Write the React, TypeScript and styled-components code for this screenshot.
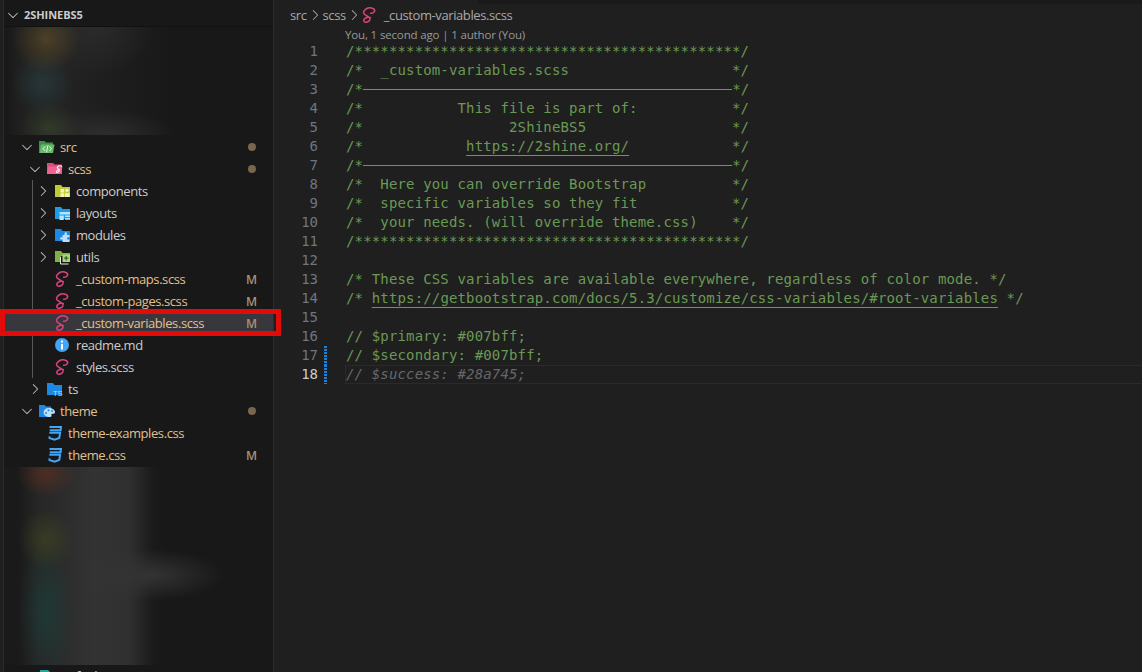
import React from "react";
import styled, { createGlobalStyle } from "styled-components";
import { VscChevronDown, VscChevronRight } from "react-icons/vsc";

const GlobalStyle = createGlobalStyle`
  html, body {
    margin: 0;
    height: 100%;
    background: #1f1f1f;
    overflow: hidden;
  }
  #root {
    height: 100%;
  }
`;

type IconKind =
  | "srcFolder"
  | "scssFolder"
  | "components"
  | "layouts"
  | "modules"
  | "utils"
  | "sass"
  | "info"
  | "ts"
  | "theme"
  | "css"
  | "settings";

const SassIcon = () => (
  <svg width="16" height="16" viewBox="3 1.500 13 13.500" fill="none">
    <path
      d="M13.5 4.5C13 2 9 1.5 6.5 3 4 4.5 3 6.8 5.5 8.2c2 1.1 4 1.6 4 3.4 0 1.8-2.2 3-4 2.7-1.7-.3-1.6-2.2-.2-3.2 1.3-1 3-1.2 4.4-.8M13.5 4.5c0 1.5-2 2.5-3.5 2.3"
      stroke="#d9407f"
      strokeWidth="1.3"
      strokeLinecap="round"
    />
  </svg>
);

const FileIcon = ({ kind }: { kind: IconKind }) => {
  switch (kind) {
    case "srcFolder":
      return (
        <svg width="16" height="16" viewBox="0 0 16 16">
          <path d="M0 2h5.5L7 3.5h7V14H0z" fill="#3f8f45" />
          <path d="M2 5.5h13.5L14 14H0.5z" fill="#66bb6a" />
          <path d="M6 7.5 4 9.7l2 2.2M10.5 7.5l2 2.2-2 2.2M8.9 6.5l-1.4 7" stroke="#e8f5e9" strokeWidth="1" fill="none" />
        </svg>
      );
    case "scssFolder":
      return (
        <svg width="16" height="16" viewBox="0 0 16 16">
          <path d="M0 2h6l1.5 1.5H15V13H0z" fill="#d84f86" />
          <path d="M1 5.5h14.5L14 13H0z" fill="#f06292" />
          <path d="M15 5.5c-1.500-1.400-5-.7-4.700 1.200.2 1.200 2.600 1.400 2.100 3-.4 1.400-2.500 2.400-3 1.300-.3-1.100 1.500-2.300 3.700-2.300" stroke="#fce4ec" strokeWidth="1.2" fill="none" />
        </svg>
      );
    case "components":
      return (
        <svg width="16" height="16" viewBox="0 0 16 16">
          <path d="M0 2h6l1.5 2H15v10H0z" fill="#c0ca33" />
          <path d="M5.5 6h3.700v3.400H5.500zM5.500 10.200h3.700V14H5.500zM10 10.200h4.500V14H10zM12 5.200l2.200 2.200L12 9.600 9.800 7.400z" fill="#f0f4c3" />
        </svg>
      );
    case "layouts":
      return (
        <svg width="16" height="16" viewBox="0 0 16 16">
          <path d="M0 2h6l1.5 2H15v10H0z" fill="#1e9be8" />
          <path d="M4.500 7H15v2.400H4.500zM4.500 10.400h4.300V15H4.500zM10 10.400h5V12h-5zM10 13h5v1.800h-5z" fill="#b3e5fc" />
        </svg>
      );
    case "modules":
      return (
        <svg width="16" height="16" viewBox="0 0 16 16">
          <path d="M0 2h6l1.5 2H15v10H0z" fill="#1e88e5" />
          <path d="M7.500 8h2V6.500a1.200 1.200 0 0 1 2.400 0V8h2.600v2.200h-1.300a1.200 1.200 0 0 0 0 2.400h1.300V15h-7v-2.400H6.300a1.200 1.200 0 0 1 0-2.400h1.200z" fill="#bbdefb" />
        </svg>
      );
    case "utils":
      return (
        <svg width="16" height="16" viewBox="0 0 16 16">
          <path d="M0 2h6l1.5 2H15v9H0z" fill="#7cb342" />
          <path d="M5 7h10v9H5z" fill="#181818" />
          <path d="M7.500 5.500H15V13H7.500z" fill="#aed581" />
          <path d="M11.200 7v4.500M9 9.200h4.400" stroke="#33691e" strokeWidth="1.2" />
          <path d="M5.500 7.500V15h8" stroke="#dcedc8" strokeWidth="1" fill="none" />
        </svg>
      );
    case "sass":
      return <SassIcon />;
    case "info":
      return (
        <svg width="16" height="16" viewBox="0 0 16 16">
          <circle cx="7" cy="8" r="7" fill="#42a5f5" />
          <path d="M6 3.500h2v2H6zM6 7h2v5.500H6z" fill="#ffffff" />
        </svg>
      );
    case "ts":
      return (
        <svg width="16" height="16" viewBox="0 0 16 16">
          <path d="M0 2h6l1.5 2H15v10H0z" fill="#1e88e5" />
          <text x="6" y="14.500" fontSize="7.500" fontFamily="Liberation Sans, sans-serif" fill="#bbdefb">TS</text>
        </svg>
      );
    case "theme":
      return (
        <svg width="16" height="16" viewBox="0 0 16 16">
          <path d="M0 2h5.500L7 3.500h5V14H0z" fill="#1e88e5" />
          <path d="M10 5c3.200 0 6 1.900 6 4.200 0 1.700-1.800 1.500-2.700 1.500-1.100 0-1.100 1.400-.7 1.900.4.700-.4 1.400-2 1.400-3.400 0-6-2-6-4.500S6.800 5 10 5z" fill="#bbdefb" />
          <circle cx="7" cy="10" r="1" fill="#1e88e5" />
          <circle cx="9.500" cy="7.300" r="1" fill="#1e88e5" />
          <circle cx="13" cy="8" r="1" fill="#1e88e5" />
        </svg>
      );
    case "css":
      return (
        <svg width="16" height="16" viewBox="0 0 16 16" fill="none">
          <path d="M2.500 2H14l-.4 3.200H2.800M2.400 7.800h10.700L12.300 13l-4.800 1.700L2.500 13l.1-1.600" stroke="#42a5f5" strokeWidth="2" />
        </svg>
      );
    case "settings":
      return (
        <svg width="16" height="16" viewBox="0 0 16 16">
          <path d="M1 2h8l4 4v10H1z" fill="#26a69a" />
        </svg>
      );
  }
};

const Page = styled.div`
  display: flex;
  height: 672px;
  width: 1142px;
  overflow: hidden;
  background: #1f1f1f;
`;

const Sidebar = styled.aside`
  flex: 0 0 271px;
  margin-left: 3px;
  box-sizing: border-box;
  height: 672px;
  background: #181818;
  border-left: 1px solid #2b2b2b;
  border-right: 1px solid #2b2b2b;
  font-family: "Open Sans", "Noto Sans", sans-serif;
  font-size: 13px;
`;

const SectionHeader = styled.div`
  display: flex;
  align-items: center;
  height: 27px;
  padding: 3px 0 0 1px;
  gap: 3px;
  color: #cccccc;
  font-size: 11px;
  font-weight: 700;
  letter-spacing: -0.05px;
  border-bottom: 1px solid #111111;
  box-sizing: border-box;

  svg {
    flex: none;
  }
`;

const BlurTop = styled.div`
  height: 108px;
  margin-bottom: 1px;
  background:
    radial-gradient(ellipse 34px 34px at 42px 12px, rgba(110, 88, 40, 0.55), transparent),
    radial-gradient(ellipse 30px 32px at 38px 56px, rgba(48, 80, 85, 0.45), transparent),
    radial-gradient(ellipse 30px 26px at 44px 100px, rgba(66, 84, 48, 0.45), transparent),
    radial-gradient(ellipse 70px 26px at 100px 108px, #2e2e2e, transparent),
    radial-gradient(ellipse 60px 50px at 90px 0px, #2b2b2b, transparent),
    linear-gradient(90deg, #181818 0, #1f1f1f 14px, #232323 60px, #1e1e1e 100px, #1a1a1a 150px, #181818 170px);
`;

const BlurBottom = styled.div`
  height: 198px;
  margin-top: 1px;
  background:
    radial-gradient(ellipse 30px 24px at 42px 6px, rgba(110, 50, 30, 0.55), transparent),
    radial-gradient(ellipse 28px 30px at 42px 72px, rgba(70, 76, 30, 0.55), transparent),
    radial-gradient(ellipse 28px 70px at 42px 145px, rgba(25, 68, 62, 0.6), transparent),
    radial-gradient(ellipse 75px 26px at 145px 108px, #343434, transparent),
    linear-gradient(90deg, #1a1a1a 14px, #262626 34px, #333333 90px, #303030 125px, #1b1b1b 148px, #181818 160px);
`;

const Row = styled.div<{ $depth: number; $selected?: boolean }>`
  position: relative;
  display: flex;
  align-items: center;
  height: 22px;
  padding-left: ${(p) => 7 + p.$depth * 8}px;
  padding-right: 16px;
  background: ${(p) => (p.$selected ? "#37373d" : "transparent")};
`;

const Guide = styled.div`
  border-left: 1px solid #585858;
  margin-left: 28px;
`;

const GuideInner = styled.div`
  margin-left: -29px;
`;

const Twistie = styled.span`
  display: flex;
  width: 16px;
  height: 16px;
  flex: none;
  margin-right: 4px;
  color: #c5c5c5;
  align-items: center;
  justify-content: center;
`;

const IconSlot = styled.span`
  display: flex;
  width: 16px;
  height: 16px;
  flex: none;
  margin-right: 5px;
`;

const Label = styled.span<{ $modified?: boolean }>`
  flex: 1;
  color: ${(p) => (p.$modified ? "#e2c08d" : "#cccccc")};
  white-space: nowrap;
  letter-spacing: -0.42px;
`;

const GitDot = styled.span`
  width: 8px;
  height: 8px;
  border-radius: 50%;
  background: #79664e;
  margin-right: 1px;
`;

const GitM = styled.span`
  color: #a89274;
  font-size: 12px;
  font-weight: 600;
`;

const Highlight = styled.div`
  position: absolute;
  left: -4px;
  right: -8px;
  top: -3px;
  bottom: -2px;
  border: 5px solid #e30a0a;
  pointer-events: none;
`;

const CutRow = styled.div`
  display: flex;
  align-items: center;
  height: 22px;
  padding-left: 35px;
  color: #cccccc;
  letter-spacing: -0.42px;
`;

const Editor = styled.main`
  flex: 1;
  min-width: 0;
  display: flex;
  flex-direction: column;
  background: #1f1f1f;
`;

const TabEdge = styled.div`
  height: 4px;
  margin-left: 204px;
  background: #1a1a1a;
`;

const Breadcrumbs = styled.div`
  display: flex;
  align-items: center;
  height: 22px;
  padding-left: 16px;
  color: #a9a9a9;
  font-family: "Open Sans", "Noto Sans", sans-serif;
  font-size: 13px;
  letter-spacing: -0.4px;

  svg {
    flex: none;
  }
`;

const Crumb = styled.span`
  white-space: nowrap;
`;

const CrumbIcon = styled.span`
  display: flex;
  margin-right: 6px;
`;

const BlameLens = styled.div`
  height: 15px;
  margin-top: 1px;
  padding-left: 71px;
  color: #999999;
  font-family: "Open Sans", "Noto Sans", sans-serif;
  font-size: 11.5px;
  line-height: 15px;
  letter-spacing: -0.15px;
`;

const Code = styled.div`
  font-family: "DejaVu Sans Mono", "Liberation Mono", monospace;
  font-size: 14px;
  letter-spacing: 0.15px;
`;

const Line = styled.div`
  display: flex;
  height: 19px;
  line-height: 19px;
  white-space: pre;
`;

const LineNo = styled.span<{ $active?: boolean }>`
  flex: 0 0 44px;
  text-align: right;
  color: ${(p) => (p.$active ? "#cccccc" : "#6e7681")};
  letter-spacing: 0;
`;

const Gutter = styled.span<{ $dirty?: boolean }>`
  flex: 0 0 3px;
  margin-left: 6px;
  margin-right: 19px;
  background: ${(p) =>
    p.$dirty
      ? "repeating-linear-gradient(180deg, #1b81d8 0 2px, transparent 2px 3px)"
      : "transparent"};
`;

const CodeText = styled.span<{ $active?: boolean }>`
  flex: 1;
  box-sizing: border-box;
  color: #6a9955;
  ${(p) =>
    p.$active
      ? `
    color: #66676a;
    font-style: italic;
    border: 1px solid #2a2a2a;
    border-right: none;
    margin-left: -1px;
    line-height: 17px;
  `
      : ""}
`;

const Link = styled.span`
  text-decoration: underline;
  text-underline-offset: 4px;
`;

const Rule = styled.span`
  display: inline-block;
  width: 369px;
  height: 1px;
  vertical-align: 4px;
  background: #6a9955;
`;

const codeLines: React.ReactNode[] = [
  "/*********************************************/",
  "/*  _custom-variables.scss                   */",
  <>/*<Rule />*/</>,
  "/*           This file is part of:           */",
  "/*                 2ShineBS5                 */",
  <>/*            <Link>https://2shine.org/</Link>            */</>,
  <>/*<Rule />*/</>,
  "/*  Here you can override Bootstrap          */",
  "/*  specific variables so they fit           */",
  "/*  your needs. (will override theme.css)    */",
  "/*********************************************/",
  "",
  "/* These CSS variables are available everywhere, regardless of color mode. */",
  <>/* <Link>https://getbootstrap.com/docs/5.3/customize/css-variables/#root-variables</Link> */</>,
  "",
  "// $primary: #007bff;",
  "// $secondary: #007bff;",
  "// $success: #28a745;",
];

type TreeRowProps = {
  depth: number;
  icon: IconKind;
  label: string;
  open?: boolean;
  folder?: boolean;
  modified?: boolean;
  dot?: boolean;
  m?: boolean;
  selected?: boolean;
};

const TreeRow = ({ depth, icon, label, open, folder, modified, dot, m, selected }: TreeRowProps) => (
  <Row $depth={depth} $selected={selected}>
    <Twistie>
      {folder ? open ? <VscChevronDown size={16} /> : <VscChevronRight size={16} /> : null}
    </Twistie>
    <IconSlot>
      <FileIcon kind={icon} />
    </IconSlot>
    <Label $modified={modified}>{label}</Label>
    {dot ? <GitDot /> : null}
    {m ? <GitM>M</GitM> : null}
    {selected ? <Highlight /> : null}
  </Row>
);

export default function App() {
  return (
    <Page>
      <GlobalStyle />
      <Sidebar>
        <SectionHeader>
          <VscChevronDown size={16} color="#c5c5c5" />
          2SHINEBS5
        </SectionHeader>
        <BlurTop />
        <TreeRow depth={1} icon="srcFolder" label="src" folder open modified dot />
        <TreeRow depth={2} icon="scssFolder" label="scss" folder open modified dot />
        <Guide>
          <GuideInner>
            <TreeRow depth={3} icon="components" label="components" folder />
            <TreeRow depth={3} icon="layouts" label="layouts" folder />
            <TreeRow depth={3} icon="modules" label="modules" folder />
            <TreeRow depth={3} icon="utils" label="utils" folder />
            <TreeRow depth={3} icon="sass" label="_custom-maps.scss" modified m />
            <TreeRow depth={3} icon="sass" label="_custom-pages.scss" modified m />
            <TreeRow depth={3} icon="sass" label="_custom-variables.scss" modified m selected />
            <TreeRow depth={3} icon="info" label="readme.md" />
            <TreeRow depth={3} icon="sass" label="styles.scss" />
          </GuideInner>
        </Guide>
        <TreeRow depth={2} icon="ts" label="ts" folder />
        <TreeRow depth={1} icon="theme" label="theme" folder open dot modified />
        <TreeRow depth={2} icon="css" label="theme-examples.css" modified />
        <TreeRow depth={2} icon="css" label="theme.css" modified m />
        <BlurBottom />
        <CutRow>
          <IconSlot>
            <FileIcon kind="settings" />
          </IconSlot>
          Default.json
        </CutRow>
      </Sidebar>
      <Editor>
        <TabEdge />
        <Breadcrumbs>
          <Crumb>src</Crumb>
          <VscChevronRight size={16} />
          <Crumb>scss</Crumb>
          <VscChevronRight size={16} />
          <CrumbIcon>
            <SassIcon />
          </CrumbIcon>
          <Crumb>_custom-variables.scss</Crumb>
        </Breadcrumbs>
        <BlameLens>You, 1 second ago | 1 author (You)</BlameLens>
        <Code>
          {codeLines.map((text, i) => (
            <Line key={i}>
              <LineNo $active={i === 17}>{i + 1}</LineNo>
              <Gutter $dirty={i >= 16} />
              <CodeText $active={i === 17}>{text}</CodeText>
            </Line>
          ))}
        </Code>
      </Editor>
    </Page>
  );
}
